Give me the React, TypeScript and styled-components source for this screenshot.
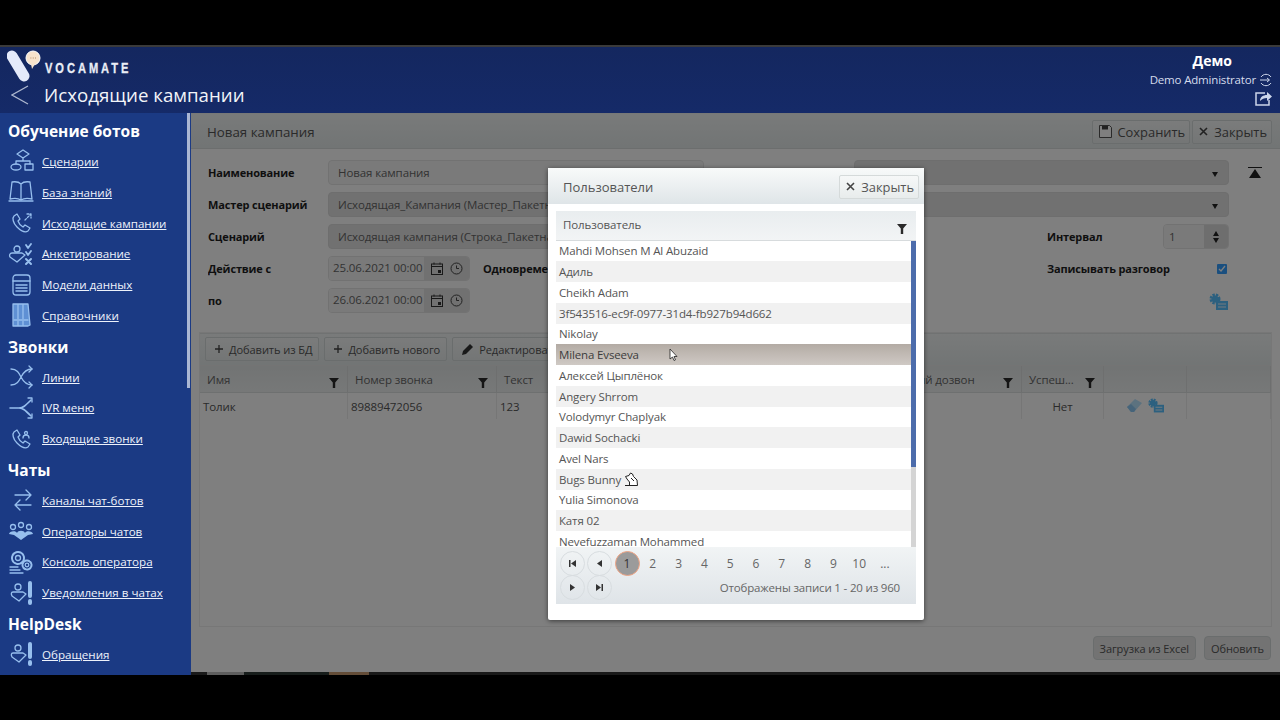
import React from 'react';
import styled, { createGlobalStyle } from 'styled-components';

const FONT = '"Open Sans", "Noto Sans", sans-serif';

const GlobalStyle = createGlobalStyle`
  html, body {
    margin: 0;
    padding: 0;
    background: #000;
    font-family: ${FONT};
    overflow: hidden;
  }
  * { box-sizing: border-box; }
`;

const Frame = styled.div`
  width: 1280px;
  height: 720px;
  padding-top: 45px;
  background: #000;
`;

const Screen = styled.div`
  height: 630px;
  border-top: 2px solid #3a3a3a;
  display: flex;
  flex-direction: column;
`;

const Header = styled.header`
  height: 66px;
  flex: none;
  background: linear-gradient(180deg, #14275f 0%, #152a68 100%);
  display: flex;
  justify-content: space-between;
  color: #fff;
`;

const Brand = styled.div`
  padding: 3px 0 0 7px;
  display: flex;
  flex-direction: column;
`;

const LogoRow = styled.div`
  display: flex;
  align-items: center;
  height: 32px;
  gap: 3px;
`;

const LogoText = styled.span`
  font-family: "Liberation Sans", sans-serif;
  font-weight: 700;
  font-size: 15px;
  letter-spacing: 4px;
  color: #e9edf6;
  margin-top: 3px;
  transform: scaleX(0.74);
  transform-origin: left center;
  -webkit-text-stroke: 0.3px #e9edf6;
`;

const TitleRow = styled.div`
  display: flex;
  align-items: center;
  gap: 15px;
  margin-top: 1px;
  padding-left: 4px;
`;

const PageTitle = styled.h1`
  margin: 0;
  font-size: 18.7px;
  line-height: 24px;
  font-weight: 400;
  color: #f2f4f8;
`;

const UserBox = styled.div`
  width: 130px;
  padding: 5px 7px 0 0;
  display: flex;
  flex-direction: column;
  align-items: flex-end;
  svg { flex: none; }
`;

const UserName = styled.div`
  font-size: 14px;
  font-weight: 700;
  line-height: 18px;
  margin-right: 41px;
`;

const UserRole = styled.div`
  display: flex;
  align-items: center;
  gap: 3px;
  font-size: 11.5px;
  letter-spacing: -0.18px;
  line-height: 18px;
  margin: 1px 0 1px;
  white-space: nowrap;
  color: #d5dcec;
`;

const Body = styled.div`
  flex: 1;
  min-height: 0;
  display: flex;
`;

const Sidebar = styled.nav`
  width: 191px;
  flex: none;
  background: #1b3a84;
  position: relative;
  padding: 3px 0 0 8px;
`;

const SideThumb = styled.div`
  position: absolute;
  right: 1px;
  top: 0;
  width: 3px;
  height: 275px;
  background: #aab6d3;
`;

const SectionTitle = styled.div`
  font-size: 15.5px;
  line-height: 30.8px;
  font-weight: 700;
  color: #fff;
  height: 30.8px;
`;

const SideItem = styled.a`
  display: flex;
  align-items: center;
  height: 30.8px;
  padding-bottom: 1.5px;
  gap: 8px;
  font-size: 11.6px;
  color: #eef2fb;
  text-decoration: underline;
  white-space: nowrap;
  svg { flex: none; }
`;

const Main = styled.main`
  flex: 1;
  min-width: 0;
  position: relative;
  display: flex;
  flex-direction: column;
  background: #fff;
`;

const Dim = styled.div`
  position: absolute;
  inset: 0;
  background: rgba(0, 0, 0, 0.5);
`;

const TitleBar = styled.div`
  height: 36px;
  flex: none;
  display: flex;
  align-items: center;
  justify-content: space-between;
  padding: 1px 8px 0 16px;
  background: linear-gradient(180deg, #f2f5f5 0%, #e4eaea 100%);
  border-bottom: 1px solid #d8dcdc;
  border-top: 1px solid #eef0f0;
  color: #555;
  font-size: 13.3px;
`;

const BtnRow = styled.div`
  display: flex;
  gap: 2px;
`;

const Btn = styled.button`
  height: 24px;
  padding: 0 4px 0 6px;
  display: inline-flex;
  align-items: center;
  gap: 6px;
  font-family: ${FONT};
  font-size: 12.9px;
  color: #555;
  background: linear-gradient(180deg, #f6f8f8 0%, #e8ecec 100%);
  border: 1px solid #d5dada;
  border-radius: 2px;
  white-space: nowrap;
`;

const Form = styled.div`
  flex: none;
  height: 183px;
  padding: 11px 51px 0 17px;
  display: flex;
  flex-direction: column;
  gap: 7px;
  position: relative;
`;

const FormRow = styled.div`
  height: 25px;
  display: flex;
  align-items: center;
`;

const FieldLabel = styled.label<{ $w?: number; $ml?: number }>`
  width: ${(p) => p.$w ?? 120}px;
  margin-left: ${(p) => p.$ml ?? 0}px;
  flex: none;
  font-size: 11px;
  letter-spacing: -0.15px;
  font-weight: 700;
  color: #1e1e1e;
  white-space: nowrap;
  overflow: hidden;
`;

const Field = styled.div<{ $w?: number; $grey?: boolean; $ml?: number }>`
  ${(p) => (p.$w ? `width: ${p.$w}px; flex: none;` : 'flex: 1;')}
  margin-left: ${(p) => p.$ml ?? 0}px;
  height: 25px;
  border: 1px solid ${(p) => (p.$grey ? '#dcdcdc' : '#e4e4e4')};
  border-radius: 4px;
  background: ${(p) => (p.$grey ? '#e2e2e2' : '#f5f5f5')};
  display: flex;
  align-items: center;
  justify-content: space-between;
  padding: 0 9px;
  font-size: 11.5px;
  letter-spacing: -0.1px;
  color: #666;
  white-space: nowrap;
  overflow: hidden;
`;

const Caret = styled.span`
  width: 0;
  height: 0;
  margin: 4px 1px 0 0;
  border-left: 3.5px solid transparent;
  border-right: 3.5px solid transparent;
  border-top: 5px solid #222;
`;

const DateBox = styled.div`
  width: 142px;
  height: 25px;
  flex: none;
  display: flex;
  border: 1px solid #e4e4e4;
  border-radius: 4px;
  overflow: hidden;
  font-size: 11.5px;
  letter-spacing: -0.1px;
  color: #666;
`;

const DateValue = styled.div`
  width: 95px;
  flex: none;
  background: #f5f5f5;
  display: flex;
  align-items: center;
  padding: 0 0 2px 4px;
  white-space: nowrap;
`;

const DateTools = styled.div`
  flex: 1;
  background: #e2e2e2;
  display: flex;
  align-items: center;
  justify-content: space-around;
  padding: 0 3px;
`;

const Spinner = styled.div`
  width: 66px;
  height: 25px;
  flex: none;
  display: flex;
  border: 1px solid #e4e4e4;
  border-radius: 4px;
  overflow: hidden;
  font-size: 11.5px;
  color: #666;
`;

const SpinValue = styled.div`
  flex: 1;
  padding-left: 5px;
  display: flex;
  align-items: center;
  background: #f5f5f5;
`;

const SpinArrows = styled.div`
  width: 24px;
  background: #dcdcdc;
  display: flex;
  flex-direction: column;
  align-items: center;
  justify-content: center;
  gap: 2px;
`;

const ArrowUp = styled.span`
  border-left: 3.5px solid transparent;
  border-right: 3.5px solid transparent;
  border-bottom: 5px solid #222;
`;

const ArrowDown = styled.span`
  border-left: 3.5px solid transparent;
  border-right: 3.5px solid transparent;
  border-top: 5px solid #222;
`;

const CheckMark = styled.span`
  width: 10px;
  height: 10px;
  flex: none;
  margin-right: 2px;
  background: #359fff;
  border-radius: 1px;
  display: flex;
  align-items: center;
  justify-content: center;
`;

const RightEnd = styled.div`
  margin-left: auto;
  display: flex;
  align-items: center;
`;

const GearSlot = styled.div`
  margin: 2px 1px 0 auto;
  display: flex;
`;

const CollapseMark = styled.div`
  position: absolute;
  top: 13px;
  right: 18px;
`;

const GridPanel = styled.section`
  flex: 1;
  min-height: 0;
  margin: 0 8px 0 8px;
  border: 1px solid #eee;
  display: flex;
  flex-direction: column;
`;

const GridToolbar = styled.div`
  height: 32px;
  flex: none;
  display: flex;
  align-items: flex-end;
  gap: 5px;
  padding: 0 0 4px 5px;
  background: linear-gradient(180deg, #f3f6f6 0%, #e4eaea 100%);
  border-top: 1px solid #e0e4e4;
`;

const ToolBtn = styled(Btn)`
  font-size: 11.1px;
  letter-spacing: -0.1px;
  gap: 5px;
  padding: 0 6px 0 8px;
`;

const Clipped = styled.span`
  display: block;
  width: 71px;
  overflow: hidden;
`;

const Columns = '148px 149px 367px 158px 82px 83px 1fr';

const GridHead = styled.div`
  height: 28px;
  flex: none;
  display: grid;
  grid-template-columns: ${Columns};
  background: linear-gradient(180deg, #e4e8e8 0%, #eef1f1 100%);
  border-top: 1px solid #e8e8e8;
  border-bottom: 1px solid #dde0e0;
`;

const HeadCell = styled.div`
  display: flex;
  align-items: center;
  justify-content: space-between;
  padding: 0 8px 0 7px;
  font-size: 11.5px;
  letter-spacing: -0.1px;
  color: #666;
  border-right: 1px solid #dcdfdf;
  white-space: nowrap;
  svg { margin-top: 6px; }
`;

const GridRow = styled.div`
  height: 26px;
  display: grid;
  grid-template-columns: ${Columns};
`;

const Cell = styled.div<{ $center?: boolean }>`
  display: flex;
  align-items: center;
  gap: 3px;
  justify-content: ${(p) => (p.$center ? 'center' : 'flex-start')};
  padding-left: ${(p) => (p.$center ? 0 : 3)}px;
  font-size: 11.5px;
  letter-spacing: -0.1px;
  color: #555;
  border-right: 1px solid #ececec;
`;

const GridFooter = styled.div`
  height: 45px;
  flex: none;
  display: flex;
  justify-content: flex-end;
  align-items: flex-start;
  gap: 8px;
  padding: 9px 9px 0 0;
`;

const FootBtn = styled(Btn)`
  font-size: 11px;
  letter-spacing: -0.08px;
  border-radius: 4px;
  padding: 0 6px;
  background: #e6e6e6;
`;

const Strip = styled.div`
  height: 3px;
  flex: none;
  display: flex;
  background: #333;
`;

const StripPart = styled.div<{ $w: number; $c: string }>`
  width: ${(p) => p.$w}px;
  background: ${(p) => p.$c};
`;

const Modal = styled.div`
  position: absolute;
  left: 357px;
  top: 55px;
  width: 376px;
  height: 452px;
  background: #fff;
  box-shadow: 0 1px 5px rgba(0, 0, 0, 0.55);
  border-radius: 2px;
  display: flex;
  flex-direction: column;
`;

const ModalHead = styled.div`
  height: 36px;
  flex: none;
  display: flex;
  align-items: center;
  justify-content: space-between;
  padding: 1px 5px 0 15px;
  background: linear-gradient(180deg, #f8fafa 0%, #dfe5e8 100%);
  font-size: 13px;
  color: #555;
`;

const ModalBody = styled.div`
  flex: 1;
  margin: 7px 8px 16px;
  display: flex;
  flex-direction: column;
  min-height: 0;
`;

const ListHead = styled.div`
  height: 29.5px;
  flex: none;
  display: flex;
  align-items: center;
  justify-content: space-between;
  padding: 0 9px 2px 7px;
  font-size: 11.5px;
  letter-spacing: -0.1px;
  color: #555;
  background: linear-gradient(180deg, #e9edef 0%, #f2f4f5 100%);
  border-bottom: 1px solid #d7dbdd;
  svg { margin-top: 8px; }
`;

const ListArea = styled.div`
  height: 306.5px;
  flex: none;
  position: relative;
  overflow: hidden;
  padding-right: 5px;
`;

const ListThumb = styled.div`
  position: absolute;
  top: 0;
  right: 0;
  width: 5px;
  height: 100%;
  background: #d4d4d4;
  &::before {
    content: '';
    display: block;
    height: 226px;
    background: #4c6cab;
  }
`;

const ListRow = styled.div<{ $alt: boolean; $hover: boolean }>`
  height: 20.75px;
  display: flex;
  align-items: center;
  gap: 3px;
  padding-left: 3px;
  font-size: 11.5px;
  letter-spacing: -0.14px;
  color: ${(p) => (p.$hover ? '#3c3c3c' : '#555')};
  white-space: nowrap;
  background: ${(p) =>
    p.$hover ? 'linear-gradient(180deg, #b3aba4 0%, #cfc9c4 100%)' : p.$alt ? '#f1f1f1' : '#fff'};
`;

const Pointer = styled.svg`
  position: absolute;
  left: 113px;
  top: 107px;
`;

const Pager = styled.div`
  flex: 1;
  display: flex;
  flex-direction: column;
  padding: 4px 0 0 3.5px;
  background: linear-gradient(180deg, #f1f4f5 0%, #dfe4e8 100%);
`;

const PagerRow = styled.div`
  display: flex;
  align-items: center;
  height: 24.5px;
`;

const PageNav = styled.span`
  width: 25px;
  height: 25px;
  margin-right: 2.500px;
  flex: none;
  border: 1px solid #d8dde0;
  border-radius: 50%;
  display: flex;
  align-items: center;
  justify-content: center;
`;

const PageNum = styled.span<{ $active?: boolean }>`
  width: 25.8px;
  height: 25px;
  flex: none;
  font-size: 12px;
  color: ${(p) => (p.$active ? '#333' : '#666')};
  display: flex;
  align-items: center;
  justify-content: center;
  border-radius: 50%;
  ${(p) => p.$active && 'background: #9b9b9b; border: 1.5px solid #f0a585; width: 25px; margin-right: .4px;'}
`;

const PagerInfo = styled.span`
  margin-left: auto;
  padding-right: 16px;
  font-size: 11.5px;
  letter-spacing: -0.18px;
  color: #666;
  white-space: nowrap;
`;

const Blue = '#97bfee';

const Ico = ({ children }: { children: React.ReactNode }) => (
  <svg width="26" height="24" viewBox="0 0 26 24" fill="none" stroke={Blue} strokeWidth="1.3" strokeLinecap="round" strokeLinejoin="round">
    {children}
  </svg>
);

const ScenarioIcon = () => (
  <Ico>
    <path d="M15 1l6 4-6 4-6-4zM15 9v3M8 15v-3h14v3" />
    <ellipse cx="8" cy="18" rx="5" ry="3" />
    <rect x="17" y="15" width="8" height="6" />
  </Ico>
);
const BookIcon = () => (
  <Ico>
    <path d="M13 4c-2-2-6-2.500-9-2L2 19c4-1 8-1 11 1 3-2 7-2 11-1L22 2c-3-.5-7 0-9 2zM13 4v16" />
    <path d="M1 21h24" />
  </Ico>
);
const PhoneOutIcon = () => (
  <Ico>
    <path d="M9 3L6 5c-2 2-1 7 3 11s8 6 11 4l2-3-5-3-2 2c-2-1-4-3-5-6l2-2z" />
    <path d="M17 9l6-6M19 3h4v4" strokeDasharray="2 1.500" />
  </Ico>
);
const SurveyIcon = () => (
  <Ico>
    <circle cx="9" cy="7" r="3" />
    <path d="M4 11h10l3 2-8 7-7-5c-1-2 0-4 2-4z" />
    <path d="M18 3l2 3 3-4M18 10l2 3 3-4" strokeWidth="1.800" />
    <path d="M18 17l5 5M23 17l-5 5" strokeWidth="2" />
  </Ico>
);
const ModelIcon = () => (
  <Ico>
    <rect x="5" y="2" width="17" height="20" rx="3" />
    <path d="M5 8h17M8 12h11M8 15h11M8 18h11" strokeWidth="1.500" />
  </Ico>
);
const DirectoryIcon = () => (
  <Ico>
    <path d="M5 1h5v22H5zM10 1h5v22h-5zM15 1h5l2 21-2 1h-5z" fill="#5f90d4" />
    <path d="M6 17h3M11 17h3M16 17h4" />
  </Ico>
);
const ShuffleIcon = () => (
  <Ico>
    <path d="M3 4c6 0 8 4 10 8s5 8 11 8M3 20c6 0 8-4 10-8s5-8 11-8" />
    <path d="M21 1l3 3-3 3M21 17l3 3-3 3" />
  </Ico>
);
const SplitIcon = () => (
  <Ico>
    <path d="M2 12h9c4 0 6-2 12-8M11 12c4 0 6 2 12 8" strokeWidth="1.600" />
    <path d="M20 2h4v4M20 22h4v-4" />
  </Ico>
);
const PhoneInIcon = () => (
  <Ico>
    <path d="M9 3L6 5c-2 2-1 7 3 11s8 6 11 4l2-3-5-3-2 2c-2-1-4-3-5-6l2-2z" />
    <circle cx="18" cy="6" r="1.500" />
    <path d="M15 11c0-2 1-3 3-3s3 1 3 3" />
  </Ico>
);
const ChannelIcon = () => (
  <Ico>
    <path d="M7 7h16M18 2l5 5-5 5M23 17H7M12 12l-5 5 5 5" />
  </Ico>
);
const OperatorsIcon = () => (
  <Ico>
    <circle cx="5" cy="8" r="2.500" />
    <circle cx="13" cy="6" r="2.500" />
    <circle cx="21" cy="8" r="2.500" />
    <path d="M1 15c0-3 7-4 8-1 1-3 7-3 8 0 1-3 8-2 8 1l-5 1-7 5-7-5z" fill={Blue} stroke="none" />
  </Ico>
);
const ConsoleIcon = () => (
  <Ico>
    <circle cx="10" cy="8" r="6" strokeDasharray="2.500 1" strokeWidth="2" />
    <circle cx="10" cy="8" r="2.500" />
    <circle cx="19" cy="15" r="4.500" strokeDasharray="2 1" strokeWidth="2" />
    <circle cx="19" cy="15" r="1.800" />
    <path d="M2 17h8M2 20h10M2 23h13" />
  </Ico>
);
const NoticeIcon = () => (
  <Ico>
    <circle cx="10" cy="6" r="3" />
    <path d="M5 11h10l3 2-7 7-7-5c-1-2-1-4 1-4z" />
    <path d="M22 2v13" strokeWidth="4" />
    <path d="M22 20v2" strokeWidth="4" />
  </Ico>
);

const FilterIcon = () => (
  <svg width="10" height="11" viewBox="0 0 10 11">
    <path d="M0 1h10L6.200 5.500V11H3.800V5.500z" fill="#2a2a2a" />
  </svg>
);

const PlusIcon = () => (
  <svg width="10" height="10" viewBox="0 0 10 10">
    <path d="M5 1v8M1 5h8" stroke="#444" strokeWidth="1.300" />
  </svg>
);

const CrossIcon = () => (
  <svg width="9" height="9" viewBox="0 0 9 9">
    <path d="M1 1l7 7M8 1L1 8" stroke="#444" strokeWidth="1.600" />
  </svg>
);

const FloppyIcon = () => (
  <svg width="13" height="13" viewBox="0 0 13 13">
    <path d="M.5.500h10l2 2v10H.5z" fill="#fff" stroke="#555" />
    <path d="M3 1h6v3.500H3z" fill="#444" />
  </svg>
);

const PencilIcon = () => (
  <svg width="13" height="13" viewBox="0 0 13 13">
    <path d="M1 12l1-4 7-7 3 3-7 7z" fill="#333" />
  </svg>
);

const CalendarIcon = () => (
  <svg width="12" height="13" viewBox="0 0 12 13" fill="none" stroke="#333">
    <rect x=".5" y="2" width="11" height="10.500" />
    <path d="M.5 4.500h11M3 .5v2M9 .5v2" />
    <rect x="7" y="8" width="3" height="3" fill="#333" stroke="none" />
  </svg>
);

const ClockIcon = () => (
  <svg width="13" height="13" viewBox="0 0 13 13" fill="none" stroke="#444">
    <circle cx="6.500" cy="6.500" r="5.500" />
    <path d="M6.500 3.500v3h2.500" />
  </svg>
);

const GearsIcon = ({ size = 20 }: { size?: number }) => (
  <svg width={size} height={size * 0.9} viewBox="0 0 20 18">
    <circle cx="7" cy="6" r="4" fill="none" stroke="#58c0ff" strokeWidth="3" strokeDasharray="2.200 1" />
    <circle cx="7" cy="6" r="3.500" fill="#58c0ff" />
    <path d="M8 8h12v9H8z" fill="#58c0ff" />
    <path d="M10 11h8M10 14h8" stroke="#e8f5ff" strokeWidth="1.200" />
  </svg>
);

const EraserIcon = () => (
  <svg width="18" height="16" viewBox="0 0 18 16">
    <path d="M1 9l8-8 7 4-8 9H5z" fill="#b8e4ff" />
    <path d="M1 9l4 5h3l2-3-5-5z" fill="#8cc8f4" />
  </svg>
);

const SCENARIOS = [
  { title: 'Обучение ботов', items: [
    ['Сценарии', <ScenarioIcon />], ['База знаний', <BookIcon />], ['Исходящие кампании', <PhoneOutIcon />],
    ['Анкетирование', <SurveyIcon />], ['Модели данных', <ModelIcon />], ['Справочники', <DirectoryIcon />],
  ] },
  { title: 'Звонки', items: [['Линии', <ShuffleIcon />], ['IVR меню', <SplitIcon />], ['Входящие звонки', <PhoneInIcon />]] },
  { title: 'Чаты', items: [
    ['Каналы чат-ботов', <ChannelIcon />], ['Операторы чатов', <OperatorsIcon />],
    ['Консоль оператора', <ConsoleIcon />], ['Уведомления в чатах', <NoticeIcon />],
  ] },
  { title: 'HelpDesk', items: [['Обращения', <NoticeIcon />]] },
] as const;

const USERS = [
  'Mahdi Mohsen M Al Abuzaid', 'Адиль', 'Cheikh Adam', '3f543516-ec9f-0977-31d4-fb927b94d662', 'Nikolay',
  'Milena Evseeva', 'Алексей Цыплёнок', 'Angery Shrrom', 'Volodymyr Chaplyak', 'Dawid Sochacki', 'Avel Nars',
  'Bugs Bunny', 'Yulia Simonova', 'Катя 02', 'Nevefuzzaman Mohammed',
];

const PagerGlyph = ({ d }: { d: string }) => (
  <svg width="9" height="9" viewBox="0 0 9 9">
    <path d={d} fill="#333" />
  </svg>
);

const App = () => (
  <Frame>
    <GlobalStyle />
    <Screen>
      <Header>
        <Brand>
          <LogoRow>
            <svg width="35" height="32" viewBox="0 0 35 32">
              <path d="M5 6l12 20" stroke="#e4eafa" strokeWidth="11" strokeLinecap="round" />
              <circle cx="26" cy="8" r="7" fill="#f7e3cc" stroke="#fff" strokeWidth="1" />
              <path d="M23.500 8h.8M25.800 8h.8M28 8h.8" stroke="#a5794f" strokeWidth="1.200" />
              <path d="M24 14l1 5 3-5z" fill="#f7e3cc" />
            </svg>
            <LogoText>VOCAMATE</LogoText>
          </LogoRow>
          <TitleRow>
            <svg width="18" height="20" viewBox="0 0 18 20" fill="none">
              <path d="M17 1L1 10l16 9" stroke="#aeb8cf" strokeWidth="1.200" />
            </svg>
            <PageTitle>Исходящие кампании</PageTitle>
          </TitleRow>
        </Brand>
        <UserBox>
          <UserName>Демо</UserName>
          <UserRole>
            Demo Administrator
            <svg width="14" height="14" viewBox="0 0 14 14" fill="none" stroke="#cbd5ea">
              <path d="M2 4a6 6 0 0 1 10 0M2 10a6 6 0 0 0 10 0" />
              <path d="M1 7h9M8 5l2.500 2L8 9" />
            </svg>
          </UserRole>
          <svg width="18" height="16" viewBox="0 0 18 16" fill="none" stroke="#cbd5ea" strokeWidth="1.500">
            <path d="M10 3H1v12h13v-5" />
            <path d="M5 11c0-4 3-6 7-6V2l5 4.500L12 11V8c-3 0-5 1-7 3z" fill="#cbd5ea" stroke="none" />
          </svg>
        </UserBox>
      </Header>
      <Body>
        <Sidebar>
          <SideThumb />
          {SCENARIOS.map((group) => (
            <div key={group.title}>
              <SectionTitle>{group.title}</SectionTitle>
              {group.items.map(([label, icon]) => (
                <SideItem key={label}>
                  {icon}
                  {label}
                </SideItem>
              ))}
            </div>
          ))}
        </Sidebar>
        <Main>
          <TitleBar>
            Новая кампания
            <BtnRow>
              <Btn><FloppyIcon />Сохранить</Btn>
              <Btn><CrossIcon />Закрыть</Btn>
            </BtnRow>
          </TitleBar>
          <Form>
            <CollapseMark>
              <svg width="14" height="12" viewBox="0 0 14 12">
                <path d="M0 .5h14" stroke="#222" />
                <path d="M7 2l6 9H1z" fill="#222" />
              </svg>
            </CollapseMark>
            <FormRow>
              <FieldLabel>Наименование</FieldLabel>
              <Field $w={376}>Новая кампания</Field>
              <Field $grey $ml={150}><span /><Caret /></Field>
            </FormRow>
            <FormRow>
              <FieldLabel>Мастер сценарий</FieldLabel>
              <Field $grey>Исходящая_Кампания (Мастер_Пакетная)<Caret /></Field>
            </FormRow>
            <FormRow>
              <FieldLabel>Сценарий</FieldLabel>
              <Field $grey $w={500}>Исходящая кампания (Строка_Пакетная)</Field>
              <RightEnd>
                <FieldLabel $w={116}>Интервал</FieldLabel>
                <Spinner>
                  <SpinValue>1</SpinValue>
                  <SpinArrows><ArrowUp /><ArrowDown /></SpinArrows>
                </Spinner>
              </RightEnd>
            </FormRow>
            <FormRow>
              <FieldLabel>Действие с</FieldLabel>
              <DateBox>
                <DateValue>25.06.2021 00:00</DateValue>
                <DateTools><CalendarIcon /><ClockIcon /></DateTools>
              </DateBox>
              <FieldLabel $w={65} $ml={13}>Одновременно</FieldLabel>
              <RightEnd>
                <FieldLabel $w={170}>Записывать разговор</FieldLabel>
                <CheckMark>
                  <svg width="8" height="8" viewBox="0 0 8 8">
                    <path d="M1 4l2 2 4-5" stroke="#fff" strokeWidth="1.300" fill="none" />
                  </svg>
                </CheckMark>
              </RightEnd>
            </FormRow>
            <FormRow>
              <FieldLabel>по</FieldLabel>
              <DateBox>
                <DateValue>26.06.2021 00:00</DateValue>
                <DateTools><CalendarIcon /><ClockIcon /></DateTools>
              </DateBox>
              <GearSlot><GearsIcon /></GearSlot>
            </FormRow>
          </Form>
          <GridPanel>
            <GridToolbar>
              <ToolBtn><PlusIcon />Добавить из БД</ToolBtn>
              <ToolBtn><PlusIcon />Добавить нового</ToolBtn>
              <ToolBtn><PencilIcon /><Clipped>Редактировать</Clipped></ToolBtn>
            </GridToolbar>
            <GridHead>
              <HeadCell>Имя<FilterIcon /></HeadCell>
              <HeadCell>Номер звонка<FilterIcon /></HeadCell>
              <HeadCell>Текст</HeadCell>
              <HeadCell>Последний дозвон<FilterIcon /></HeadCell>
              <HeadCell>Успеш...<FilterIcon /></HeadCell>
              <HeadCell />
              <HeadCell />
            </GridHead>
            <GridRow>
              <Cell>Толик</Cell>
              <Cell>89889472056</Cell>
              <Cell>123</Cell>
              <Cell />
              <Cell $center>Нет</Cell>
              <Cell $center><EraserIcon /><GearsIcon size={17} /></Cell>
              <Cell />
            </GridRow>
          </GridPanel>
          <GridFooter>
            <FootBtn>Загрузка из Excel</FootBtn>
            <FootBtn>Обновить</FootBtn>
          </GridFooter>
          <Strip>
            <StripPart $w={16} $c="#333" />
            <StripPart $w={37} $c="#bcbcbc" />
            <StripPart $w={85} $c="#2f3a36" />
            <StripPart $w={40} $c="#c99a70" />
          </Strip>
          <Dim />
          <Modal>
            <ModalHead>
              Пользователи
              <Btn><CrossIcon />Закрыть</Btn>
            </ModalHead>
            <ModalBody>
              <ListHead>Пользователь<FilterIcon /></ListHead>
              <ListArea>
                {USERS.map((name, i) => (
                  <ListRow key={name} $alt={i % 2 === 1} $hover={i === 5}>
                    {name}
                    {name === 'Bugs Bunny' && (
                      <svg width="15" height="15" viewBox="0 0 15 15" fill="#fff" stroke="#222" strokeWidth="1">
                        <path d="M3 7L1.500 4.500 5 3.500 6.500 1 8.500 2l1 2.500L13 8l.5 5.500H5.500V10L3 7zM7 6l3 3M1 13.500h5" />
                      </svg>
                    )}
                  </ListRow>
                ))}
                <ListThumb />
                <Pointer width="9" height="13" viewBox="0 0 9 13">
                  <path d="M1 1v10l2.500-2 1.500 3.500 1.500-.7L5 8.500h3z" fill="#fff" stroke="#222" strokeWidth=".8" />
                </Pointer>
              </ListArea>
              <Pager>
                <PagerRow>
                  <PageNav><PagerGlyph d="M1 1h1.500v7H1zM8 1v7L3 4.500z" /></PageNav>
                  <PageNav><PagerGlyph d="M7 1v7L2 4.500z" /></PageNav>
                  <PageNum $active>1</PageNum>
                  {[2, 3, 4, 5, 6, 7, 8, 9, 10].map((n) => <PageNum key={n}>{n}</PageNum>)}
                  <PageNum>...</PageNum>
                </PagerRow>
                <PagerRow>
                  <PageNav><PagerGlyph d="M2 1v7l5-3.500z" /></PageNav>
                  <PageNav><PagerGlyph d="M1 1v7l5-3.500zM6.500 1H8v7H6.500z" /></PageNav>
                  <PagerInfo>Отображены записи 1 - 20 из 960</PagerInfo>
                </PagerRow>
              </Pager>
            </ModalBody>
          </Modal>
        </Main>
      </Body>
    </Screen>
  </Frame>
);

export default App;
